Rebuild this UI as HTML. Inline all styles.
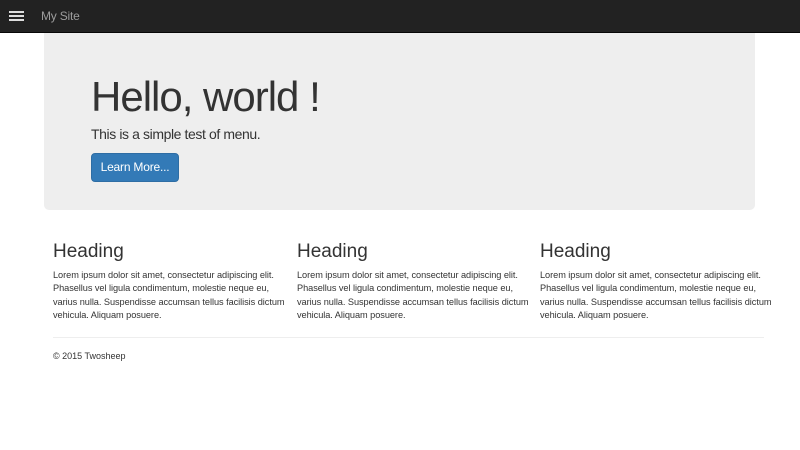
<!DOCTYPE html>
<html><head><style>
body{margin:0;width:800px;height:450px;background:#fff;font-family:"Liberation Sans",sans-serif;color:#333;position:relative;overflow:hidden}
.nav{position:absolute;left:0;top:0;width:800px;height:32px;background:#222;border-bottom:1px solid #080808}
.bar{position:absolute;left:9px;width:15px;height:2px;background:#ddd}
.brand{position:absolute;left:41px;top:9px;font-size:12px;letter-spacing:-0.2px;color:#9d9d9d}
.jumbo{position:absolute;left:44px;top:33px;width:711px;height:177px;background:#eee;border-radius:0 0 5px 5px}
h1{position:absolute;left:91px;top:72px;margin:0;font-size:42px;letter-spacing:-1px;font-weight:normal;line-height:50px}
.sub{position:absolute;left:91px;top:125px;font-size:14px;letter-spacing:-0.4px;line-height:18px}
.btn{position:absolute;left:91px;top:153px;width:86px;height:27px;background:#337ab7;border:1px solid #2e6da4;border-radius:4px;color:#fff;font-size:12px;letter-spacing:-0.2px;line-height:27px;text-align:center}
.col{position:absolute;top:240px;width:236px}
.col h2{margin:0;font-size:19px;font-weight:normal;line-height:24px}
.col p{margin:5px 0 0;font-size:9.2px;letter-spacing:-0.05px;line-height:13.4px}
hr{position:absolute;left:53px;top:337px;width:711px;margin:0;border:0;border-top:1px solid #eee}
.foot{position:absolute;left:53px;top:351px;font-size:9px}
</style></head><body>
<div class="nav">
<div class="bar" style="top:11px"></div><div class="bar" style="top:15px"></div><div class="bar" style="top:19px"></div>
<div class="brand">My Site</div></div>
<div class="jumbo"></div>
<h1>Hello, world !</h1>
<div class="sub">This is a simple test of menu.</div>
<div class="btn">Learn More...</div>
<div class="col" style="left:53px"><h2>Heading</h2><p>Lorem ipsum dolor sit amet, consectetur adipiscing elit. Phasellus vel ligula condimentum, molestie neque eu, varius nulla. Suspendisse accumsan tellus facilisis dictum vehicula. Aliquam posuere.</p></div>
<div class="col" style="left:297px"><h2>Heading</h2><p>Lorem ipsum dolor sit amet, consectetur adipiscing elit. Phasellus vel ligula condimentum, molestie neque eu, varius nulla. Suspendisse accumsan tellus facilisis dictum vehicula. Aliquam posuere.</p></div>
<div class="col" style="left:540px"><h2>Heading</h2><p>Lorem ipsum dolor sit amet, consectetur adipiscing elit. Phasellus vel ligula condimentum, molestie neque eu, varius nulla. Suspendisse accumsan tellus facilisis dictum vehicula. Aliquam posuere.</p></div>
<hr>
<div class="foot">© 2015 Twosheep</div>
</body></html>
